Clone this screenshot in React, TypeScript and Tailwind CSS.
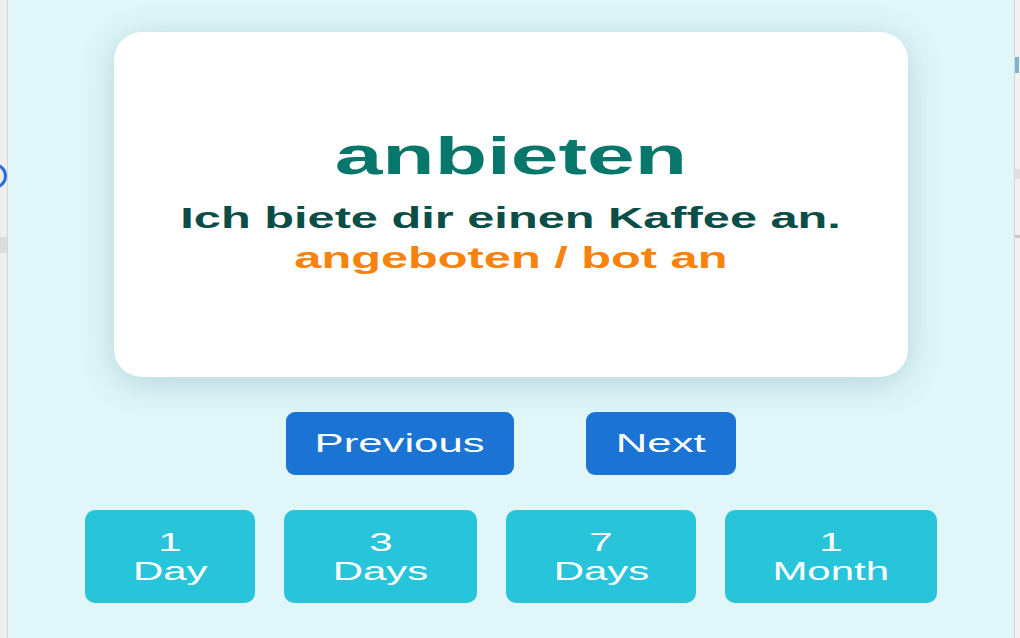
// Flashcard popup — word, example sentence, past forms, nav + review intervals.
const font = { fontFamily: '"Liberation Sans", Arial, sans-serif' };

const intervals = [
  { n: "1", label: "Day", w: "w-[170px]" },
  { n: "3", label: "Days", w: "w-[193px]" },
  { n: "7", label: "Days", w: "w-[190px]" },
  { n: "1", label: "Month", w: "w-[212px]" },
];

// the shot is stretched sideways, so glyphs get a matching horizontal scale
function Wide({ children }: { children: React.ReactNode }) {
  return <span className="inline-block scale-x-[1.68] whitespace-nowrap">{children}</span>;
}

export default function App() {
  return (
    <div className="flex h-[638px] w-full overflow-hidden" style={font}>
      {/* browser window peeking out on the left */}
      <div className="flex w-[8px] shrink-0 flex-col overflow-hidden border-r border-[#d6d6d6] bg-[#eeeeee]">
        <div className="-ml-[19px] mt-[163px] h-[26px] w-[26px] shrink-0 rounded-full border-[3px] border-[#2a6fd6]" />
        <div className="mt-[48px] h-[16px] w-full shrink-0 bg-[#dcdcdc]" />
      </div>

      <main className="flex flex-1 flex-col items-center bg-[#e0f6f9]">
        <section className="mt-[32px] flex h-[345px] w-[794px] flex-col items-center justify-center rounded-[28px] bg-white pb-[4px] shadow-[0_6px_34px_rgba(40,110,130,0.24)]">
          <div className="text-[51px] font-bold leading-[56px] text-[#07776b]">
            <Wide>anbieten</Wide>
          </div>
          <div className="mt-[11px] text-[29px] font-bold leading-[44px] text-[#0b4d47]">
            <Wide>Ich biete dir einen Kaffee an.</Wide>
          </div>
          <div className="text-[29px] font-bold leading-[37px] text-[#f7820c]">
            <Wide>angeboten / bot an</Wide>
          </div>
        </section>

        <div className="mt-[35px] flex gap-[72px]">
          <button className="h-[63px] w-[228px] rounded-[9px] bg-[#1b74d3] text-[26px] text-white">
            <Wide>Previous</Wide>
          </button>
          <button className="h-[63px] w-[150px] rounded-[9px] bg-[#1b74d3] text-[26px] text-white">
            <Wide>Next</Wide>
          </button>
        </div>

        <div className="mt-[35px] flex gap-[29px]">
          {intervals.map((it, i) => (
            <button
              key={i}
              className={`flex h-[93px] ${it.w} flex-col items-center justify-center rounded-[10px] bg-[#27c4da] text-[25px] leading-[29px] text-white`}
            >
              <Wide>{it.n}</Wide>
              <Wide>{it.label}</Wide>
            </button>
          ))}
        </div>
      </main>

      {/* right edge of the page behind */}
      <div className="flex w-[6px] shrink-0 flex-col border-l border-[#d6d6d6] bg-[#f1f1f1]">
        <div className="mt-[57px] h-[16px] w-[4px] bg-[#7fb3d4]" />
        <div className="mt-[96px] h-[10px] w-full bg-[#e0e0e0]" />
        <div className="mt-[56px] h-[3px] w-full bg-[#c9c9c9]" />
      </div>
    </div>
  );
}
